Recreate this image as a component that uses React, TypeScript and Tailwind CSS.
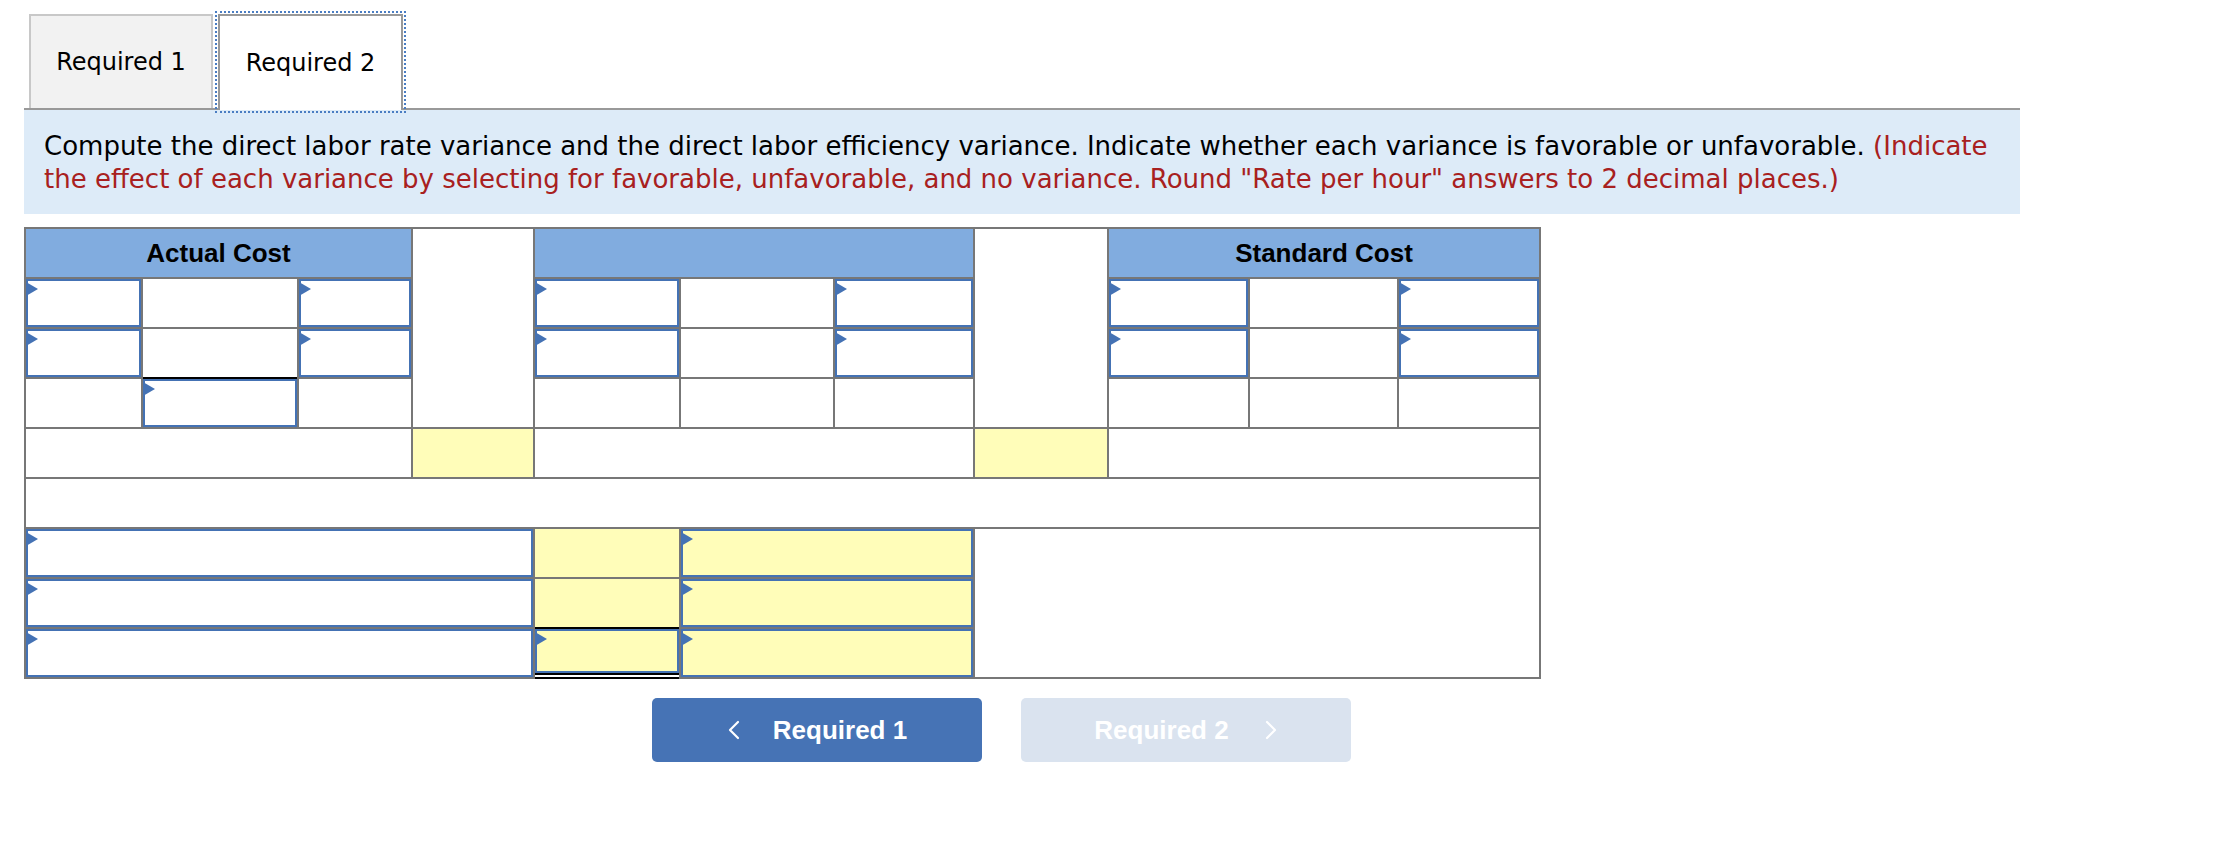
import React from 'react';

const BLUE = 'border-[#4472b4]';

function Arrow() {
  return (
    <svg className="absolute -left-[2px] top-[1px]" width="12" height="14" viewBox="0 0 12 14">
      <path d="M0 0 L12 7 L0 14 Z" fill="#4472b4" />
    </svg>
  );
}

// an entry box sitting inside a grid cell
function Entry({ yellow = false, className = '' }: { yellow?: boolean; className?: string }) {
  return (
    <div className={`flex flex-col ${yellow ? 'bg-[#fffdb9]' : 'bg-white'} ${className}`}>
      <div className={`relative flex-1 border-2 ${BLUE}`}>
        <Arrow />
      </div>
    </div>
  );
}

function Plain({ yellow = false, className = '' }: { yellow?: boolean; className?: string }) {
  return <div className={`${yellow ? 'bg-[#fffdb9]' : 'bg-white'} ${className}`} />;
}

function Head({ label, span = 'col-span-3' }: { label?: string; span?: string }) {
  return (
    <div className={`${span} flex items-center justify-center bg-[#81acdf] font-['Liberation_Sans',Arial,sans-serif] text-[26px] font-bold text-black`}>
      {label}
    </div>
  );
}

function EntryRow() {
  // one row of a cost group: entry, blank, entry
  return (
    <>
      <Entry />
      <Plain />
      <Entry />
    </>
  );
}

function Chevron({ dir }: { dir: 'left' | 'right' }) {
  return (
    <svg width="14" height="20" viewBox="0 0 14 20" fill="none">
      <path
        d={dir === 'left' ? 'M11 2 L3 10 L11 18' : 'M3 2 L11 10 L3 18'}
        stroke="white"
        strokeWidth="2.2"
        strokeLinecap="round"
        strokeLinejoin="round"
      />
    </svg>
  );
}

export default function App() {
  return (
    <div className="h-[846px] w-full bg-white font-['DejaVu_Sans',Verdana,sans-serif] text-black">
      {/* Tabs */}
      <div className="ml-[24px] flex w-[1996px] items-end gap-[5px] border-b-2 border-[#999] pl-[5px] pt-[14px]">
        <div className="flex h-[94px] w-[184px] items-center justify-center border-2 border-b-0 border-[#c8c8c8] bg-[#f2f2f2] text-[24px]">
          Required 1
        </div>
        <div className="relative z-10 -mb-[2px] flex h-[96px] w-[185px] items-center justify-center border-2 border-b-0 border-[#999] bg-white text-[24px] outline-2 outline-offset-1 outline-dotted outline-[#4a7dc2]">
          Required 2
        </div>
      </div>

      {/* Instructions */}
      <div className="ml-[24px] w-[1996px] bg-[#ddebf8] pb-[18px] pl-[20px] pr-[20px] pt-[20px] text-[26px] leading-[33px]">
        Compute the direct labor rate variance and the direct labor efficiency variance. Indicate whether each variance is
        favorable or unfavorable.{' '}
        <span className="text-[#a82020]">
          (Indicate the effect of each variance by selecting for favorable, unfavorable, and no variance. Round "Rate per
          hour" answers to 2 decimal places.)
        </span>
      </div>

      {/* Worksheet */}
      <div className="ml-[24px] mt-[13px] grid w-fit grid-cols-[115px_154px_112px_120px_144px_152px_138px_132px_139px_147px_140px] grid-rows-[repeat(9,48px)] gap-[2px] bg-[#777] p-[2px]">
        <Head label="Actual Cost" />
        <Plain className="row-span-4" />
        <Head />
        <Plain className="row-span-4" />
        <Head label="Standard Cost" />

        <EntryRow />
        <EntryRow />
        <EntryRow />

        <EntryRow />
        <EntryRow />
        <EntryRow />

        <Plain />
        <Entry className="-mt-[2px] border-t-2 border-black" />
        <Plain />
        <Plain />
        <Plain />
        <Plain />
        <Plain />
        <Plain />
        <Plain />

        <Plain className="col-span-3" />
        <Plain yellow />
        <Plain className="col-span-3" />
        <Plain yellow />
        <Plain className="col-span-3" />

        <Plain className="col-span-11" />

        <Entry className="col-span-4" />
        <Plain yellow />
        <Entry yellow className="col-span-2" />
        <Plain className="col-span-4 row-span-3" />

        <Entry className="col-span-4" />
        <Plain yellow />
        <Entry yellow className="col-span-2" />

        <Entry className="col-span-4" />
        <div className="-mb-[2px] -mt-[2px] flex flex-col border-t-2 border-black bg-[#fffdb9]">
          <div className={`relative flex-1 border-2 ${BLUE}`}>
            <Arrow />
          </div>
          <div className="h-[6px] border-y-2 border-black bg-white" />
        </div>
        <Entry yellow className="col-span-2" />
      </div>

      {/* Navigation */}
      <div className="mt-[19px] flex gap-[39px] pl-[652px] font-['Liberation_Sans',Arial,sans-serif] text-[26px] font-bold text-white">
        <button className="flex h-[64px] w-[330px] items-center justify-center gap-[32px] rounded-[5px] bg-[#4673b5]">
          <Chevron dir="left" />
          <span>Required 1</span>
        </button>
        <button className="flex h-[64px] w-[330px] items-center justify-center gap-[35px] rounded-[5px] bg-[#dae3ef]">
          <span>Required 2</span>
          <Chevron dir="right" />
        </button>
      </div>
    </div>
  );
}
